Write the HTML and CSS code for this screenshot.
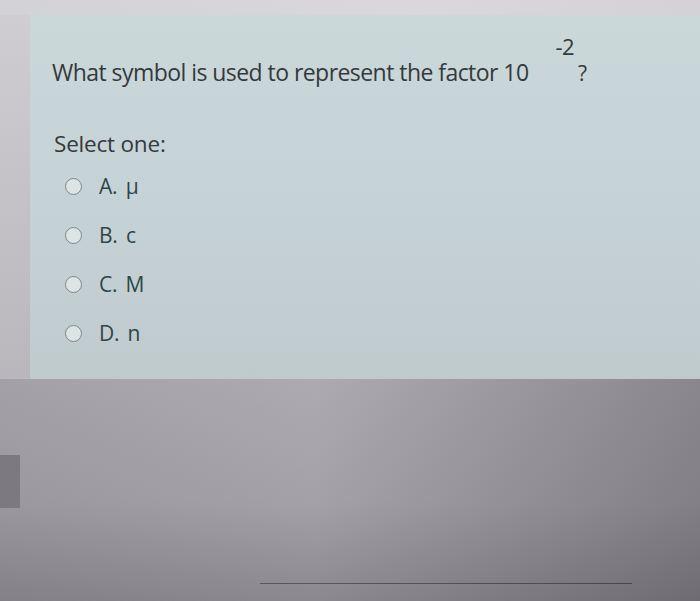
FILE: index.html
```html
<!DOCTYPE html>
<html>
<head>
<meta charset="utf-8">
<link rel="stylesheet" href="styles.css">
</head>
<body>
<div class="screen">
  <div class="topbar"></div>
  <div class="main">
    <div class="panel">
      <p class="question">What symbol is used to represent the factor 10<span class="exp">-2</span><span class="qmark">?</span></p>
      <p class="prompt">Select one:</p>
      <ul class="options">
        <li class="option"><span class="radio"></span><span class="label">A. μ</span></li>
        <li class="option"><span class="radio"></span><span class="label">B. c</span></li>
        <li class="option"><span class="radio"></span><span class="label">C. M</span></li>
        <li class="option"><span class="radio"></span><span class="label">D. n</span></li>
      </ul>
    </div>
  </div>
  <div class="lower">
    <div class="tab"></div>
    <div class="footer-line"></div>
  </div>
</div>
</body>
</html>
```

FILE: styles.css
```css
html, body {
  margin: 0;
  padding: 0;
}
body {
  width: 700px;
  height: 601px;
  overflow: hidden;
  font-family: "Open Sans", "Noto Sans", sans-serif;
}
.screen {
  display: flex;
  flex-direction: column;
  height: 601px;
  background: linear-gradient(90deg, #c9c7cc 0%, #c3c1c7 100%);
}
.topbar {
  height: 15px;
  background: linear-gradient(90deg, #d3d2d6 0%, #d9d7dc 60%, #d4d2d7 100%);
}
.main {
  padding-left: 30px;
  background: linear-gradient(180deg, #cfcdd2 0%, #b9b6bc 100%);
}
.panel {
  height: 364px;
  box-sizing: border-box;
  padding: 20px 0 0 22px;
  background: linear-gradient(180deg, #cbd8da 0%, #c6d3d6 50%, #bfcacd 100%);
  color: #34393c;
}
.question {
  margin: 0;
  font-size: 23px;
  line-height: 50px;
  letter-spacing: -0.55px;
  white-space: nowrap;
}
.exp {
  display: inline-block;
  font-size: 22px;
  line-height: 22px;
  vertical-align: 26px;
  margin-left: 27px;
  margin-right: 4px;
}
.qmark {
  font-size: 21px;
}
.prompt {
  margin: 32px 0 0 2px;
  font-size: 22.5px;
  line-height: 28px;
  letter-spacing: -0.2px;
}
.options {
  list-style: none;
  margin: 14px 0 0 0;
  padding: 0 0 0 13px;
  display: flex;
  flex-direction: column;
  gap: 21px;
}
.option {
  display: flex;
  align-items: center;
  gap: 17px;
  height: 28px;
  color: #2d4748;
  font-size: 21px;
  word-spacing: 3px;
  letter-spacing: -0.2px;
}
.radio {
  width: 15px;
  height: 15px;
  border: 1.8px solid #80868a;
  border-radius: 50%;
  background: #dde4e5;
}
.lower {
  flex: 1;
  position: relative;
  background: linear-gradient(180deg, #aba8af 0%, #a19ea5 55%, #86828a 100%);
}
.lower::after {
  content: "";
  position: absolute;
  inset: 0;
  background: linear-gradient(90deg, rgba(120,116,124,0.15) 0%, rgba(190,186,194,0.1) 45%, rgba(60,56,64,0.3) 100%);
  pointer-events: none;
}
.tab {
  width: 20px;
  height: 53px;
  margin-top: 76px;
  background: #7c7980;
}
.footer-line {
  width: 372px;
  height: 1px;
  margin: 75px 0 0 260px;
  background: #4d4950;
}
```
